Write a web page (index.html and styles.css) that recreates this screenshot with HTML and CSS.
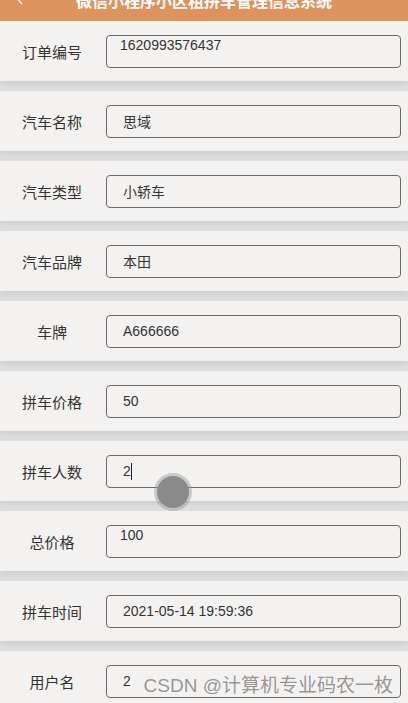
FILE: index.html
```html
<!DOCTYPE html>
<html lang="zh-CN">
<head>
<meta charset="UTF-8">
<meta name="viewport" content="width=device-width, initial-scale=1.0">
<title>拼车详情</title>
<link rel="stylesheet" href="styles.css">
</head>
<body>
  <!-- Top bar (scrolled, only the lower edge shows) -->
  <div class="topbar">
    <svg class="back" width="12" height="20" viewBox="0 0 12 20"><path d="M10 1 L2 10 L10 19" fill="none" stroke="#fff" stroke-width="1.6"/></svg>
    <div class="title">微信小程序小区租拼车管理信息系统</div>
  </div>

  <div class="form">
    <div class="field">
      <div class="label">订单编号</div>
      <div class="input top">1620993576437</div>
    </div>
    <div class="field">
      <div class="label">汽车名称</div>
      <div class="input">思域</div>
    </div>
    <div class="field">
      <div class="label">汽车类型</div>
      <div class="input">小轿车</div>
    </div>
    <div class="field">
      <div class="label">汽车品牌</div>
      <div class="input">本田</div>
    </div>
    <div class="field">
      <div class="label">车牌</div>
      <div class="input">A666666</div>
    </div>
    <div class="field">
      <div class="label">拼车价格</div>
      <div class="input">50</div>
    </div>
    <div class="field">
      <div class="label">拼车人数</div>
      <div class="input">2<span class="caret"></span></div>
    </div>
    <div class="field">
      <div class="label">总价格</div>
      <div class="input top">100</div>
    </div>
    <div class="field">
      <div class="label">拼车时间</div>
      <div class="input">2021-05-14 19:59:36</div>
    </div>
    <div class="field">
      <div class="label">用户名</div>
      <div class="input">2</div>
    </div>
  </div>

  <!-- touch indicator + watermark -->
  <div class="touch"></div>
  <div class="watermark">CSDN @计算机专业码农一枚</div>
</body>
</html>
```

FILE: styles.css
```css
body {
  margin: 0;
  font-family: "Liberation Sans", "Noto Sans CJK SC", sans-serif;
  background: #dcdcdc;
  height: 703px;
  overflow: hidden;
  position: relative;
}

.topbar {
  position: relative;
  height: 21px;
  background-color: #de925e;
  overflow: hidden;
}

.back {
  position: absolute;
  left: 12px;
  top: -15px;
}

.title {
  margin-top: -12px;
  text-align: center;
  color: #fff;
  font-size: 16px;
  font-weight: bold;
  line-height: 24px;
  font-family: "Noto Sans CJK SC", sans-serif;
}

.field {
  display: flex;
  align-items: center;
  height: 60px;
  margin-bottom: 10px;
  background-color: #f3f2f0;
  box-shadow: 0 3px 4px rgba(0, 0, 0, 0.06);
}

.label {
  width: 104px;
  text-align: center;
  font-size: 15px;
  color: #333;
  font-family: "Noto Sans CJK SC", sans-serif;
}

.input {
  display: flex;
  align-items: center;
  box-sizing: border-box;
  width: 295px;
  height: 33px;
  margin-left: 2px;
  padding-left: 16px;
  border: 1px solid #6a6a6a;
  border-radius: 4px;
  font-size: 14px;
  color: #333;
  font-family: "Liberation Sans", "Noto Sans CJK SC", sans-serif;
}

.input.top {
  align-items: flex-start;
  padding-left: 13px;
  padding-top: 1px;
}

.caret {
  display: inline-block;
  width: 1px;
  height: 17px;
  background: #222;
}

.touch {
  position: absolute;
  left: 157px;
  top: 476px;
  width: 32px;
  height: 32px;
  border-radius: 50%;
  background: #8a8a8a;
  box-shadow: 0 0 0 3px rgba(150, 150, 150, 0.45);
}

.watermark {
  position: absolute;
  right: 15px;
  top: 670px;
  font-size: 19px;
  color: rgba(120, 120, 120, 0.75);
  font-family: "Liberation Sans", "Noto Sans CJK SC", sans-serif;
}
```
